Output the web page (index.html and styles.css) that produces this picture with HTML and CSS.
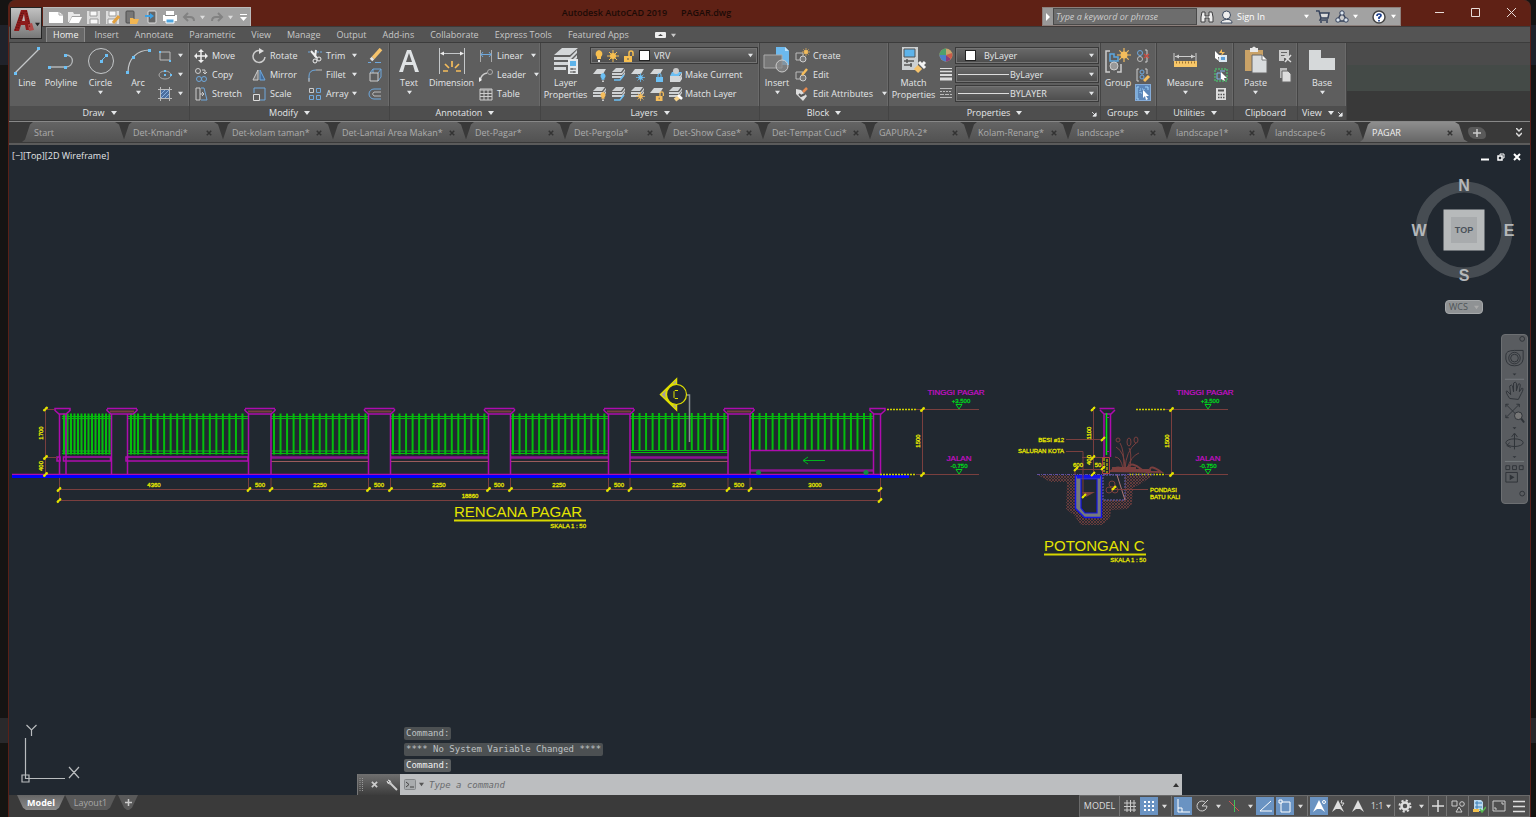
FILE: index.html
```html
<!DOCTYPE html>
<html lang="en">
<head>
<meta charset="utf-8">
<title>Autodesk AutoCAD 2019 - PAGAR.dwg</title>
<link rel="stylesheet" href="styles.css">
</head>
<body>
<svg class="defs" aria-hidden="true">
  <symbol id="down" viewBox="0 0 6 6"><path d="M0 1h6L3 5z" fill="currentColor"/></symbol>
  <symbol id="x" viewBox="0 0 8 8"><path d="M1 1l6 6M7 1L1 7" stroke="currentColor" stroke-width="2"/></symbol>
  <symbol id="corner" viewBox="0 0 6 6"><path d="M0 0l4 4M5 1v4H1z" stroke="currentColor" fill="currentColor"/></symbol>
  <symbol id="sheet" viewBox="0 0 16 16"><path d="M5 2h9l-3 5H1z" fill="#d4d7d9"/></symbol>
  <symbol id="sheets" viewBox="0 0 16 16"><path d="M5 1h8l-3 4H1zM1 6h10l3-4v2l-3 4H1zM1 9h10l3-4v2l-3 4H1z" fill="#cfd2d4"/></symbol>
  <symbol id="bulb" viewBox="0 0 8 12"><path d="M4 0a4 4 0 0 1 2 7v2H2V7A4 4 0 0 1 4 0z" fill="currentColor"/><path d="M3 10h2v2H3z" fill="#eee"/></symbol>
  <symbol id="sun" viewBox="0 0 12 12"><circle cx="6" cy="6" r="3" fill="currentColor"/><path d="M6 0v12M0 6h12M2 2l8 8M10 2l-8 8" stroke="currentColor"/></symbol>
  <symbol id="lock" viewBox="0 0 12 12"><path d="M1 6h8v6H1z" fill="currentColor"/><path d="M6 6V3a2 2 0 0 1 4 0v3" fill="none" stroke="currentColor" stroke-width="1.5"/><path d="M5 8v2" stroke="#555"/></symbol>
  <symbol id="compass" viewBox="0 0 14 14"><path d="M7 1l2 4 4 8-4-3H5l-4 3 4-8z" fill="currentColor"/></symbol>
</svg>

<div class="window">
  <header class="titlebar">
    <button class="appmenu" aria-label="Application menu">
      <svg width="22" height="23" viewBox="0 0 22 23"><path d="M1 22L8 1h6l3 12 1 8h-5l-1-5H8l-2 6z" fill="#8e1c1c"/><path d="M9 12l2-7 1 7z" fill="#c0b8b8"/><path d="M15 15l4-1 2 7-5 1z" fill="#b04a48"/><path d="M2 21L9 3M13 2l4 17M5 19l6-17" stroke="#5c1212" stroke-width="1.200" stroke-dasharray="1 1.500"/></svg>
      <svg class="dn"><use href="#down"/></svg>
    </button>
    <nav class="quick" aria-label="Quick access">
      <button aria-label="New"><svg width="14" height="12"><path d="M0 1h10l4 3v8H0z" fill="#fff"/><path d="M10 1v3h4" stroke="#aaa" fill="none"/></svg></button>
      <button aria-label="Open"><svg width="14" height="12"><path d="M0 1h5l1 2h6v2H4l-3 6H0z" fill="#e9e9e9"/><path d="M4 6h10l-3 6H1z" fill="#fff"/></svg></button>
      <button aria-label="Save"><svg width="14" height="13"><path d="M0 0h13v13H0z" fill="#ddd"/><path d="M3 0h7v5H3zM3 8h8v5H3z" fill="#f8f8f8" stroke="#999"/></svg></button>
      <button aria-label="Save as"><svg width="14" height="13"><path d="M0 0h13v13H0z" fill="#ddd"/><path d="M3 0h7v5H3zM2 8h8v5H2z" fill="#f8f8f8" stroke="#999"/><path d="M7 12l6-7" stroke="#e0a040" stroke-width="3"/></svg></button>
      <button aria-label="Open from web"><svg width="14" height="14"><rect x="1" y="1" width="8" height="12" rx="1" fill="#777" stroke="#505050"/><path d="M5 8h3l1 1h5l-2 5H5z" fill="#f2b652"/></svg></button>
      <button aria-label="Save to mobile"><svg width="14" height="14"><rect x="4" y="1" width="8" height="12" rx="1" fill="#666" stroke="#ddd"/><path d="M1 5h5V3l4 3-4 3V7H1z" fill="#3ba1e6"/></svg></button>
      <button aria-label="Plot"><svg width="14" height="13"><path d="M3 0h8v4H3zM0 4h14v6H0z" fill="#fff"/><path d="M2 4.500h10" stroke="#888"/><path d="M3 8h8v4H3z" fill="#4ea5de" stroke="#fff"/></svg></button>
      <button aria-label="Undo"><svg width="14" height="10"><path d="M12 9q0-4-4-4H3M6 1L2 5l4 4" stroke="#828282" stroke-width="2" fill="none"/></svg></button>
      <button class="mini" aria-label="Undo list"><svg class="dn"><use href="#down"/></svg></button>
      <button aria-label="Redo"><svg width="14" height="10"><path d="M2 9q0-4 4-4h5M8 1l4 4-4 4" stroke="#828282" stroke-width="2" fill="none"/></svg></button>
      <button class="mini" aria-label="Redo list"><svg class="dn"><use href="#down"/></svg></button>
      <button class="mini" aria-label="Customize"><svg width="7" height="8"><path d="M0 1.500h7" stroke="#fff"/><path d="M0 4h7L3.500 8z" fill="#fff"/></svg></button>
    </nav>
    <div class="caption"><span>Autodesk AutoCAD 2019</span><span>PAGAR.dwg</span></div>
    <div class="info">
      <button class="expand" aria-label="Collapse search"><svg width="4" height="8"><path d="M0 0l4 4-4 4z" fill="#fff"/></svg></button>
      <input class="search" type="text" aria-label="Search" placeholder="Type a keyword or phrase">
      <button class="find" aria-label="Find"><svg width="14" height="14"><path d="M2 2h3v4h4V2h3l1 5v5H9V8H5v4H1V7z" fill="#eee" stroke="#3e3e40"/></svg></button>
      <button class="sign"><svg width="13" height="14"><circle cx="6.500" cy="5" r="4" fill="#eee" stroke="#3c4a60"/><path d="M1 13q0-3 5.500-3.500T12 13z" fill="#eee" stroke="#3c4a60"/></svg>Sign In<svg class="dn push"><use href="#down"/></svg></button>
      <button class="cart" aria-label="App store"><svg width="14" height="13"><path d="M0 1h3l2 7h7l1-5H4M5 8l-1 2h8" stroke="#35415a" stroke-width="1.500" fill="#ddd"/><circle cx="5" cy="12" r="1" fill="#35415a"/><circle cx="11" cy="12" r="1" fill="#35415a"/></svg></button>
      <button class="net" aria-label="Stay connected"><svg width="14" height="13"><path d="M7 2l5 9H2z" stroke="#35415a" stroke-width="1.500" fill="#ccc"/><g fill="#dce6f0" stroke="#35415a"><circle cx="7" cy="3" r="2.200"/><circle cx="3" cy="10" r="2.200"/><circle cx="11" cy="10" r="2.200"/></g></svg><svg class="dn"><use href="#down"/></svg></button>
      <button class="help" aria-label="Help"><svg width="14" height="14"><circle cx="7" cy="7" r="6" fill="#fff" stroke="#444" stroke-width="1.500"/><path d="M5 6q0-2 2-2t2 1.500q0 1-2 2V9M7 10v1.500" stroke="#1b3f8f" stroke-width="1.700" fill="none"/></svg><svg class="dn"><use href="#down"/></svg></button>
    </div>
    <div class="winbtns">
      <button aria-label="Minimize"><svg width="9" height="9"><path d="M0 4.500h9" stroke="#e8dcd8"/></svg></button>
      <button aria-label="Maximize"><svg width="9" height="9"><path d="M.5.5h8v8h-8z" stroke="#e8dcd8" fill="none"/></svg></button>
      <button aria-label="Close"><svg width="9" height="9"><path d="M0 0l9 9M9 0L0 9" stroke="#e8dcd8"/></svg></button>
    </div>
  </header>

  <nav class="menu" aria-label="Ribbon tabs">
    <button class="on">Home</button><button>Insert</button><button>Annotate</button><button>Parametric</button><button>View</button><button>Manage</button><button>Output</button><button>Add-ins</button><button>Collaborate</button><button>Express Tools</button><button>Featured Apps</button>
    <button class="tog" aria-label="Minimize ribbon"><svg width="11" height="6"><rect width="11" height="6" rx="1" fill="#eee"/><path d="M3 4h5L5.500 2z" fill="#444"/></svg><svg class="dn"><use href="#down"/></svg></button>
  </nav>

  <div class="ribbon">
    <section class="panel draw">
      <div class="tools">
        <button class="big"><svg class="bi" viewBox="0 0 30 30"><path d="M3 27L27 3" stroke="#c4c7c9" stroke-width="1.200"/><path d="M2 26h3v3H2zM25 1h3v3h-3z" fill="#6cc0f5"/></svg>Line</button>
        <button class="big"><svg class="bi" viewBox="0 0 30 30"><path d="M3 21h17c8 0 9-12 0-12" stroke="#b2b5b7" stroke-width="1.300" fill="none"/><path d="M2 20h3v3H2zM18 20h3v3h-3zM18 8h3v3h-3z" fill="#6cc0f5"/></svg>Polyline</button>
        <button class="big"><svg class="bi" viewBox="0 0 30 30"><circle cx="15" cy="15" r="12.500" stroke="#c4c7c9" fill="none"/><path d="M15 15l6-6" stroke="#6cc0f5"/><path d="M14 14h3v3h-3zM19 8h3v3h-3z" fill="#6cc0f5"/></svg>Circle<svg class="dn"><use href="#down"/></svg></button>
        <button class="big"><svg class="bi" viewBox="0 0 30 30"><path d="M5 26C5 13 14 4 27 4" stroke="#c4c7c9" fill="none" stroke-width="1.200"/><path d="M3 25h3v3H3zM9 10h3v3H9zM25 3h3v3h-3z" fill="#6cc0f5"/></svg>Arc<svg class="dn"><use href="#down"/></svg></button>
        <div class="stack">
          <button class="sm" aria-label="Rectangle"><svg class="si" viewBox="0 0 16 16"><path d="M3 4h10v8H3z" fill="none" stroke="#bbb"/><path d="M2 3h2v2H2zM12 12h2v2h-2z" fill="#6cc0f5"/></svg><svg class="dn"><use href="#down"/></svg></button>
          <button class="sm" aria-label="Ellipse"><svg class="si" viewBox="0 0 16 16"><ellipse cx="8" cy="8" rx="6" ry="4" fill="none" stroke="#aaa"/><path d="M7 7h2v2H7zM13 7h2v2h-2zM7 3h2v2H7z" fill="#6cc0f5"/></svg><svg class="dn"><use href="#down"/></svg></button>
          <button class="sm" aria-label="Hatch"><svg class="si" viewBox="0 0 16 16"><path d="M4 4h8v8H4z" fill="#4d6f9e"/><path d="M4 8l4-4M4 12l8-8M8 12l4-4" stroke="#8ab0dd"/><path d="M3.500 1v14M12.500 1v14M1 3.500h14M1 12.500h14" stroke="#bbb"/></svg><svg class="dn"><use href="#down"/></svg></button>
        </div>
      </div>
      <h2>Draw <svg class="dn"><use href="#down"/></svg></h2>
    </section>

    <section class="panel modify">
      <div class="tools">
        <div class="stack">
          <button class="sm"><svg class="si" viewBox="0 0 16 16"><path d="M8 3v10M3 8h10" stroke="#eee" stroke-width="1.500"/><path d="M8 1l3 3H5zM8 15l3-3H5zM1 8l3-3v6zM15 8l-3-3v6z" fill="#eee"/></svg>Move</button>
          <button class="sm"><svg class="si" viewBox="0 0 16 16"><g fill="none"><circle cx="5" cy="4" r="2.500" stroke="#ccc"/><circle cx="6" cy="12" r="2.500" stroke="#6ea8dd"/><circle cx="11" cy="12" r="2.500" stroke="#6ea8dd"/><path d="M9 3h3v4M10 5l2 2 2-2" stroke="#ccc"/></g></svg>Copy</button>
          <button class="sm"><svg class="si" viewBox="0 0 16 16"><path d="M3 2h4v12H3zM7 8h4M9 6l2 2-2 2" stroke="#ccc" fill="none"/><path d="M8 2h3l3 12H8" stroke="#6ea8dd" fill="none"/></svg>Stretch</button>
        </div>
        <div class="stack">
          <button class="sm"><svg class="si" viewBox="0 0 16 16"><path d="M9 2.500A6 6 0 1 0 14 9" stroke="#ccc" fill="none" stroke-width="1.500"/><path d="M8 0l5 3-5 3z" fill="#ddd"/></svg>Rotate</button>
          <button class="sm"><svg class="si" viewBox="0 0 16 16"><path d="M7 3v10H2z" fill="#777" stroke="#ccc"/><path d="M9 3v10h5z" fill="#426a99" stroke="#6ea8dd"/></svg>Mirror</button>
          <button class="sm"><svg class="si" viewBox="0 0 16 16"><path d="M3 7V2h11v12H9" fill="none" stroke="#6ea8dd"/><path d="M2.500 8.500h6v6h-6z" fill="none" stroke="#ddd"/></svg>Scale</button>
        </div>
        <div class="stack trim">
          <button class="sm"><svg class="si" viewBox="0 0 16 16"><path d="M4 3l6 7M9 2L8 9" stroke="#eee" stroke-width="2"/><circle cx="8" cy="13" r="2" fill="none" stroke="#eee"/><circle cx="12" cy="11" r="2" fill="none" stroke="#eee"/><path d="M1 4h3M10 4h5" stroke="#6ea8dd" stroke-dasharray="2 1"/></svg>Trim<svg class="dn push"><use href="#down"/></svg></button>
          <button class="sm"><svg class="si" viewBox="0 0 16 16"><path d="M2 14V9q0-6 7-6" fill="none" stroke="#6ea8dd"/><path d="M9 3h6M2 11v4" stroke="#bbb"/></svg>Fillet<svg class="dn push"><use href="#down"/></svg></button>
          <button class="sm"><svg class="si" viewBox="0 0 16 16"><path d="M2.500 2.500h4v4h-4z" stroke="#ccc" fill="none"/><path d="M9.500 2.500h4v4h-4zM2.500 9.500h4v4h-4zM9.500 9.500h4v4h-4z" stroke="#6ea8dd" fill="none"/></svg>Array<svg class="dn push"><use href="#down"/></svg></button>
        </div>
        <div class="stack">
          <button class="sm" aria-label="Erase"><svg class="si" viewBox="0 0 16 16"><path d="M6 10l8-9" stroke="#f5c36c" stroke-width="3.500"/><path d="M4 12l2-2" stroke="#e5e5e5" stroke-width="3.500"/><path d="M1 14.500h3M8 14.500h6" stroke="#6ea8dd"/></svg></button>
          <button class="sm" aria-label="Explode"><svg class="si" viewBox="0 0 16 16"><path d="M3 6l3-4h8v8l-3 4M11 6l3-4M6 2v4" fill="none" stroke="#6ea8dd"/><path d="M3 6h8v8H3z" fill="none" stroke="#ccc"/></svg></button>
          <button class="sm" aria-label="Offset"><svg class="si" viewBox="0 0 16 16"><path d="M14 3H7a5 5 0 0 0 0 10h7" stroke="#6ea8dd" fill="none"/><path d="M14 6H7q-3 2 0 4h7" stroke="#bbb" fill="none"/></svg></button>
        </div>
      </div>
      <h2>Modify <svg class="dn"><use href="#down"/></svg></h2>
    </section>

    <section class="panel annot">
      <div class="tools">
        <button class="big"><svg class="bi" viewBox="0 0 30 30"><path d="M5 26L13 4h4l8 22h-4l-2-7h-8l-2 7zM12 16h6l-3-9z" fill="#dfe2e4" fill-rule="evenodd"/></svg>Text<svg class="dn"><use href="#down"/></svg></button>
        <button class="big"><svg class="bi" viewBox="0 0 30 30"><path d="M2.500 2v26M27.500 2v26M4 7.500h22" stroke="#c4c7c9"/><path d="M3 7.500l4-2v4zM27 7.500l-4-2v4z" fill="#eee"/><path d="M6 25h5M19 25h5M8 18l4 4M22 18l-4 4M15 15v6" stroke="#f5bd5c" stroke-width="1.700"/></svg>Dimension</button>
        <div class="stack">
          <button class="sm"><svg class="si" viewBox="0 0 16 16"><path d="M2.500 2v12M13.500 2v12" stroke="#aaa"/><path d="M3 6.500h10M5 4L3 6.500 5 9M11 4l2 2.500L11 9" stroke="#6ea8dd" fill="none"/></svg>Linear<svg class="dn"><use href="#down"/></svg></button>
          <button class="sm"><svg class="si" viewBox="0 0 16 16"><path d="M2 14q1-7 7-8" stroke="#ccc" fill="none" stroke-width="1.500"/><circle cx="12" cy="5" r="2.500" stroke="#aaa" fill="none"/><path d="M1 15v-5l3 3z" fill="#eee"/></svg>Leader<svg class="dn"><use href="#down"/></svg></button>
          <button class="sm"><svg class="si" viewBox="0 0 16 16"><path d="M2 3h12v11H2z" fill="none" stroke="#ccc"/><path d="M2 4h12M2 7.500h12M2 10.500h12M6 4v10M10 4v10" stroke="#ccc"/></svg>Table</button>
        </div>
      </div>
      <h2>Annotation <svg class="dn"><use href="#down"/></svg></h2>
    </section>

    <section class="panel layers">
      <div class="tools">
        <button class="big"><svg class="bi" viewBox="0 0 30 30"><path d="M11 2h16l-8 7H3zM3 11h16l7-7v3l-7 7H3zM3 16h16l7-7v3l-7 7H3zM3 21h12v3H3z" fill="#d4d7d9"/><path d="M17 13h10v15H17z" fill="#e5e8ea"/><path d="M19 15h6v5h-6z" fill="#5db3ea"/><path d="M19 23h6M19 26h6M21 22v2M23 25v2" stroke="#555"/></svg>Layer<br>Properties</button>
        <div class="side">
          <label class="combo layer"><svg width="8" height="12" class="amb"><use href="#bulb"/></svg><svg width="12" height="12" class="amb"><use href="#sun"/></svg><svg width="12" height="12" class="amb"><use href="#lock"/></svg><i class="swatch"></i><select aria-label="Layer"><option>VRV</option></select><svg class="dn"><use href="#down"/></svg></label>
          <div class="line">
            <button class="sm" aria-label="Off"><svg class="si" viewBox="0 0 16 16"><use href="#sheet"/><use href="#bulb" x="8" y="6" width="6" height="9" color="#6cc0f5"/></svg></button>
            <button class="sm" aria-label="Isolate"><svg class="si" viewBox="0 0 16 16"><use href="#sheets"/><path d="M3 13h6l4-5" stroke="#6cc0f5" stroke-width="1.500" fill="none"/></svg></button>
            <button class="sm" aria-label="Freeze"><svg class="si" viewBox="0 0 16 16"><use href="#sheet"/><use href="#sun" x="6" y="6" width="9" height="9" color="#6cc0f5"/></svg></button>
            <button class="sm" aria-label="Lock"><svg class="si" viewBox="0 0 16 16"><use href="#sheet"/><path d="M7 10h7v5H7z" fill="#6cc0f5"/><path d="M9 10V8a1.500 1.500 0 0 1 3 0v2" stroke="#6cc0f5" fill="none"/></svg></button>
            <button class="sm"><svg class="si" viewBox="0 0 16 16"><path d="M2 9h10l2-4v3l-2 4H2zM2 12h10l2-3v3l-2 3H2z" fill="#d4d7d9"/><path d="M4 5h10l-3 4H2z" fill="#6cc0f5"/><circle cx="8" cy="4" r="3" fill="#ccc"/></svg>Make Current</button>
          </div>
          <div class="line">
            <button class="sm" aria-label="Turn all on"><svg class="si" viewBox="0 0 16 16"><use href="#sheets"/><use href="#bulb" x="8" y="6" width="6" height="9" color="#f5bd5c"/></svg></button>
            <button class="sm" aria-label="Unisolate"><svg class="si" viewBox="0 0 16 16"><use href="#sheets"/><path d="M3 14h6l4-5" stroke="#6cc0f5" stroke-width="1.500" fill="none"/></svg></button>
            <button class="sm" aria-label="Thaw all"><svg class="si" viewBox="0 0 16 16"><use href="#sheets"/><use href="#sun" x="6" y="6" width="9" height="9" color="#f5bd5c"/></svg></button>
            <button class="sm" aria-label="Unlock"><svg class="si" viewBox="0 0 16 16"><use href="#sheet"/><use href="#lock" x="6" y="5" width="10" height="10" color="#f5bd5c"/></svg></button>
            <button class="sm"><svg class="si" viewBox="0 0 16 16"><use href="#sheets"/><path d="M7 14l4-3" stroke="#f5d28c" stroke-width="4"/><path d="M10 9l4 4" stroke="#fff" stroke-width="2.500"/></svg>Match Layer</button>
          </div>
        </div>
      </div>
      <h2>Layers <svg class="dn"><use href="#down"/></svg></h2>
    </section>

    <section class="panel block">
      <div class="tools">
        <button class="big"><svg class="bi" viewBox="0 0 30 30"><path d="M14 1h9l4 4v14H14z" fill="#6cb9ee"/><path d="M23 1v4h4" fill="#bfe2fa"/><path d="M2 9h18v13H2z" fill="#777" stroke="#aaa"/><circle cx="20" cy="20" r="6" fill="#888b" stroke="#ccc"/></svg>Insert<svg class="dn"><use href="#down"/></svg></button>
        <div class="stack">
          <button class="sm"><svg class="si" viewBox="0 0 16 16"><path d="M2 5h7v7H2z" fill="none" stroke="#bbb"/><circle cx="9" cy="11" r="3" fill="#777" stroke="#ccc"/><use href="#sun" x="8" y="0" width="8" height="8" color="#f5bd5c"/></svg>Create</button>
          <button class="sm"><svg class="si" viewBox="0 0 16 16"><path d="M2 5h7v7H2z" fill="none" stroke="#bbb"/><circle cx="9" cy="11" r="3" fill="#777" stroke="#ccc"/><path d="M8 8l5-6" stroke="#f5bd5c" stroke-width="2.500"/></svg>Edit</button>
          <button class="sm"><svg class="si" viewBox="0 0 16 16"><path d="M2 3l5 1 6 6-4 5-7-7z" fill="#ddd"/><path d="M5 8l2 2 4-2" stroke="#555" stroke-width="2" fill="none"/><path d="M9 6l4-4" stroke="#e58a50" stroke-width="2.500"/></svg>Edit Attributes<svg class="dn wide"><use href="#down"/></svg></button>
        </div>
      </div>
      <h2>Block <svg class="dn"><use href="#down"/></svg></h2>
    </section>

    <section class="panel props">
      <div class="tools">
        <button class="big"><svg class="bi" viewBox="0 0 30 30"><path d="M3 1h16v23H3z" fill="#ccd0d2"/><path d="M5 3h11v8H5z" fill="#5db3ea" stroke="#555"/><path d="M5 15h10M5 19h8M8 13v4M12 17v4" stroke="#555" stroke-width="1.500"/><path d="M17 25l4-4" stroke="#f5c36c" stroke-width="6"/><path d="M20 16l6 6M23 19l3-3" stroke="#f4f4f4" stroke-width="3"/></svg>Match<br>Properties</button>
        <div class="stack icons">
          <svg class="si" viewBox="0 0 16 16"><circle cx="8" cy="8" r="6.500" fill="#c7a56e"/><path d="M8 8V1.500A6.500 6.500 0 0 0 1.500 8z" fill="#4ea06b"/><path d="M8 8H1.500A6.500 6.500 0 0 0 8 14.500z" fill="#4a7fc8"/><path d="M8 8v6.500A6.500 6.500 0 0 0 13 12z" fill="#8a3d7c"/><path d="M8 8l5 4a6.500 6.500 0 0 0 1-6z" fill="#cc5b49"/></svg>
          <svg class="si" viewBox="0 0 16 16"><path d="M2 2.500h12" stroke="#ddd"/><path d="M2 5.500h12" stroke="#ddd" stroke-width="1.500"/><path d="M2 9h12" stroke="#ddd" stroke-width="2"/><path d="M2 13h12" stroke="#ddd" stroke-width="3"/></svg>
          <svg class="si" viewBox="0 0 16 16"><path d="M2 3.500h12M2 12.500h12" stroke="#bbb"/><path d="M2 6.500h12" stroke="#bbb" stroke-dasharray="2 1"/><path d="M2 9.500h12" stroke="#bbb" stroke-dasharray="4 1"/></svg>
        </div>
        <div class="side">
          <label class="combo"><i class="swatch"></i><select aria-label="Color"><option>ByLayer</option></select><svg class="dn"><use href="#down"/></svg></label>
          <label class="combo"><i class="rule"></i><select aria-label="Lineweight"><option>ByLayer</option></select><svg class="dn"><use href="#down"/></svg></label>
          <label class="combo"><i class="rule"></i><select aria-label="Linetype"><option>BYLAYER</option></select><svg class="dn"><use href="#down"/></svg></label>
        </div>
      </div>
      <h2>Properties <svg class="dn"><use href="#down"/></svg><svg class="launch"><use href="#corner"/></svg></h2>
    </section>

    <section class="panel groups">
      <div class="tools">
        <button class="big"><svg class="bi" viewBox="0 0 30 30"><path d="M7 5H3v21h4M14 26h4V18" stroke="#ccc" stroke-width="1.500" fill="none"/><path d="M7 8h4v3h4v4H7z" fill="none" stroke="#5da8e0" stroke-width="1.500"/><circle cx="11" cy="20" r="4" fill="#999" stroke="#ccc"/><use href="#sun" x="14" y="2" width="14" height="14" color="#f5bd5c"/></svg>Group</button>
        <div class="stack">
          <button class="sm" aria-label="Ungroup"><svg class="si" viewBox="0 0 16 16"><circle cx="5" cy="5" r="2.500" stroke="#6ea8dd" fill="none"/><circle cx="5" cy="11" r="2.500" stroke="#bbb" fill="none"/><path d="M10 2h2v12h-2" stroke="#ccc" fill="none"/><path d="M9 6l5 4M14 6l-5 4" stroke="#c94c42" stroke-width="1.500"/></svg></button>
          <button class="sm" aria-label="Group edit"><svg class="si" viewBox="0 0 16 16"><path d="M4 2H2v12h2M10 2h2v5" stroke="#ccc" fill="none"/><circle cx="7" cy="5" r="2" stroke="#6ea8dd" fill="none"/><circle cx="7" cy="10" r="2" stroke="#6ea8dd" fill="none"/><path d="M9 14l5-5" stroke="#f5bd5c" stroke-width="3"/></svg></button>
          <button class="sm active" aria-label="Group selection"><svg class="si" viewBox="0 0 16 16"><path d="M4 2H2v12h2M10 2h3v3" stroke="#9dd2fa" fill="none"/><path d="M5 4h4v4H5z" stroke="#9dd2fa" fill="none" stroke-dasharray="1 1"/><path d="M8 5l6 6h-3l2 3-2 1-1-4-2 2z" fill="#fff"/></svg></button>
        </div>
      </div>
      <h2>Groups <svg class="dn"><use href="#down"/></svg></h2>
    </section>

    <section class="panel utils">
      <div class="tools">
        <button class="big"><svg class="bi" viewBox="0 0 30 30"><path d="M4 7v8M26 7v8M5 10.500h20" stroke="#ccc"/><path d="M5 10.500l4-2v4zM25 10.500l-4-2v4z" fill="#ccc"/><path d="M4 15h23v6H4z" fill="#f8c768"/><path d="M6 16.500h19" stroke="#9b7332" stroke-width="2" stroke-dasharray="1 2"/></svg>Measure<svg class="dn"><use href="#down"/></svg></button>
        <div class="stack">
          <button class="sm" aria-label="Quick select"><svg class="si" viewBox="0 0 16 16"><path d="M6 7h8v7H6z" fill="#dce8f2"/><path d="M8 9h4v3H8z" fill="#5b9ed8"/><path d="M2 3l6 6H5l1 4-4-3z" fill="#fff"/><path d="M9 1L6 5h3l-1 3 4-4H9z" fill="#f5bd5c"/></svg></button>
          <button class="sm" aria-label="Select all"><svg class="si" viewBox="0 0 16 16"><path d="M2 2h12v12H2z" fill="none" stroke="#4cb36a" stroke-width="1.500" stroke-dasharray="2 1"/><path d="M4 6h4v6H4zM7 4h5" stroke="#7fb7e8" fill="none"/><path d="M8 5l6 6h-3l1 3-4-2z" fill="#fff"/></svg></button>
          <button class="sm" aria-label="Calculator"><svg class="si" viewBox="0 0 16 16"><path d="M3 2h10v12H3z" fill="#ddd"/><path d="M5 4.500h6" stroke="#555" stroke-width="2"/><path d="M5 8.500h7M5 11.500h7" stroke="#555" stroke-width="1.500" stroke-dasharray="1.500 1"/></svg></button>
        </div>
      </div>
      <h2>Utilities <svg class="dn"><use href="#down"/></svg></h2>
    </section>

    <section class="panel clip">
      <div class="tools">
        <button class="big"><svg class="bi" viewBox="0 0 30 30"><path d="M4 4h18v21H4z" fill="#c9a267"/><path d="M9 2h2q2-3 4 0h2v4H9z" fill="#e8e8e8"/><path d="M11 9h10l5 5v13H11z" fill="#d9dcde" stroke="#666"/><path d="M21 9v5h5" fill="#fff" stroke="#777"/></svg>Paste<svg class="dn"><use href="#down"/></svg></button>
        <div class="stack two">
          <button class="sm" aria-label="Cut"><svg class="si" viewBox="0 0 16 16"><path d="M2 2h10v8H7v3H2z" fill="#ccc"/><path d="M4 4.500h6M4 7.500h4" stroke="#666"/><path d="M7 8l7 6M14 7l-6 7" stroke="#ddd" stroke-width="1.500"/></svg></button>
          <button class="sm" aria-label="Copy clip"><svg class="si" viewBox="0 0 16 16"><path d="M3 1h7v10H3z" fill="#bbb"/><path d="M5 4h6l3 3v8H5z" fill="#ddd" stroke="#666"/></svg></button>
        </div>
      </div>
      <h2>Clipboard</h2>
    </section>

    <section class="panel view">
      <div class="tools">
        <button class="big"><svg class="bi" viewBox="0 0 30 30"><path d="M2 4h12v8h14v12H2z" fill="#d6d9da"/></svg>Base<svg class="dn"><use href="#down"/></svg></button>
      </div>
      <h2>View <svg class="dn"><use href="#down"/></svg><svg class="launch"><use href="#corner"/></svg></h2>
    </section>
    <div class="rest"></div>
  </div>

  <nav class="files" aria-label="Open drawings">
    <button class="file"><span>Start</span></button>
    <button class="file"><span>Det-Kmandi*</span><svg class="cx"><use href="#x"/></svg></button>
    <button class="file kolam"><span>Det-kolam taman*</span><svg class="cx"><use href="#x"/></svg></button>
    <button class="file lantai"><span>Det-Lantai Area Makan*</span><svg class="cx"><use href="#x"/></svg></button>
    <button class="file"><span>Det-Pagar*</span><svg class="cx"><use href="#x"/></svg></button>
    <button class="file"><span>Det-Pergola*</span><svg class="cx"><use href="#x"/></svg></button>
    <button class="file"><span>Det-Show Case*</span><svg class="cx"><use href="#x"/></svg></button>
    <button class="file cuci"><span>Det-Tempat Cuci*</span><svg class="cx"><use href="#x"/></svg></button>
    <button class="file"><span>GAPURA-2*</span><svg class="cx"><use href="#x"/></svg></button>
    <button class="file"><span>Kolam-Renang*</span><svg class="cx"><use href="#x"/></svg></button>
    <button class="file"><span>landscape*</span><svg class="cx"><use href="#x"/></svg></button>
    <button class="file"><span>landscape1*</span><svg class="cx"><use href="#x"/></svg></button>
    <button class="file last"><span>landscape-6</span><svg class="cx"><use href="#x"/></svg></button>
    <button class="file on"><span>PAGAR</span><svg class="cx"><use href="#x"/></svg></button>
    <button class="plus" aria-label="New drawing"><svg width="8" height="8"><path d="M4 0v8M0 4h8" stroke="#ccc" stroke-width="1.500"/></svg></button>
    <button class="more" aria-label="More drawings"><svg width="6" height="9"><path d="M0 0l3 3 3-3M0 5l3 3 3-3" stroke="#ddd" stroke-width="1.500" fill="none"/></svg></button>
  </nav>

  <main class="canvas">
    <svg class="drawing" viewBox="9 145 1521 650" preserveAspectRatio="xMinYMin meet" role="img" aria-label="Fence elevation and section">
      <defs>
        <g id="cap"><path d="M-15 408.500H15M-15 409v1.500L-11 414H11L15 410.500V409" class="mag2"/><path d="M-12 411.500H12" class="salmon"/></g>
        <g id="tick"><path d="M-2 2L2-2" stroke="#e0e000" stroke-width="2"/><path d="M-2 1h2M0-1h2" stroke="#e0e000" stroke-width="2"/></g>
        <g id="level"><path d="M-3 404.500h6l-3 4.500z" fill="none" stroke="#00d41c"/></g>
        <pattern id="soil" width="3" height="3" patternUnits="userSpaceOnUse"><path d="M0 3L3 0M0 0l3 3" stroke="#7c4240" stroke-width=".7"/></pattern>
        <g id="levels">
          <text x="956" y="395" class="cad m mid">TINGGI PAGAR</text><text x="961" y="403" class="cad g mid">+3.500</text><use href="#level" x="959"/>
          <text x="959" y="461" class="cad m mid">JALAN</text><text x="959" y="468" class="cad g mid">-0.750</text><use href="#level" x="959" y="65"/>
          <path d="M922.500 409.500v65M916 409.500h63M916 474.500h63" class="brown"/>
          <path d="M887 409.500h29M880 474.500h36" stroke="#d0d000" stroke-width="1.500" stroke-dasharray="2 1"/>
          <use href="#tick" x="922.500" y="409.500"/><use href="#tick" x="922.500" y="474.500"/>
          <text transform="translate(920 441) rotate(-90)" class="cad s y mid">1500</text>
        </g>
      </defs>

      <g class="bars">
        <path d="M63 434h49" stroke-width="41" stroke-dasharray="2 1.500"/>
        <path d="M130 434h7" stroke-width="41" stroke-dasharray="2 1.500"/>
        <path d="M137 434h111M273 434h96M392 434h96M512 434h96" stroke-width="41" stroke-dasharray="2 4.530"/>
        <path d="M632 432h96" stroke-width="38" stroke-dasharray="2 4.530"/><path d="M752 431.500h121" stroke-width="37" stroke-dasharray="2 4.530"/>
        <path d="M62 416.500h49M128 416.500h120M271 416.500h98M391 416.500h97M511 416.500h97M630 416.500h98M750 416.500h123M62 418.500h49M128 418.500h120M271 418.500h98M391 418.500h97M511 418.500h97M630 418.500h98M750 418.500h123M62 451h49M128 451h120M271 451h98M391 451h97M511 451h97M630 450.500h98M62 453.500h49M128 453.500h120M271 453.500h98M391 453.500h97M511 453.500h97M630 452.500h98" stroke-width="1.200"/>
      </g>
      <path d="M271 461.500h97M391 461.500h97M511 461.500h97M630 461.500h98" stroke="#9c5c5c"/>
      <path d="M271 457.500h97M391 457.500h97M511 457.500h97M630 457.500h98M750 470.500h123" class="mag3"/>
      <path d="M59.500 414v60M66 414v60M111.500 414v60M127.500 414v60M248.500 414v60M271 414v60M368.500 414v60M390.500 414v60M488.500 414v60M510.500 414v60M608.500 414v60M630 414v60M728 414v60M750 414v60M873.500 414v60M880.500 414v60" class="mag2"/>
      <path d="M63.500 457h47v4h-47zM126 457h122v4H126zM57 457h3v4h-3zM750 450.500h123" class="mag2"/>
      <path d="M55 408.500h15v2l-4 3.500h-7l-4-3.500zM870 408.500h15v2l-4 3.500h-7l-4-3.500z" class="mag2"/>
      <g><use href="#cap" x="122"/><use href="#cap" x="260"/><use href="#cap" x="379.500"/><use href="#cap" x="499.500"/><use href="#cap" x="619"/><use href="#cap" x="739"/></g>
      <path d="M12 474.500h869" class="mag2"/><path d="M12 476.500h897" stroke="#0000fa" stroke-width="3"/>
      <path d="M825 460.500h-22M808 457l-5 3.500 5 3.500" stroke="#00b41c" fill="none"/><circle cx="758.500" cy="472.500" r="2.500" fill="#108a48"/><circle cx="866" cy="472.500" r="2.500" fill="#108a48"/>

      <path d="M45.500 409v65M45 409.500h9M45 457.500h12M59.500 489.500h821M59.500 500.500h821M59.500 478v23M248.500 478v11M271 478v11M368.500 478v11M390.500 478v11M488.500 478v11M510.500 478v11M608.500 478v11M630 478v11M728 478v11M750 478v11M880.500 478v23" class="brown"/>
      <g><use href="#tick" x="45.500" y="409"/><use href="#tick" x="45.500" y="457.500"/><use href="#tick" x="45.500" y="474.500"/><use href="#tick" x="59" y="489.500"/><use href="#tick" x="249" y="489.500"/><use href="#tick" x="271" y="489.500"/><use href="#tick" x="368.500" y="489.500"/><use href="#tick" x="390.500" y="489.500"/><use href="#tick" x="488.500" y="489.500"/><use href="#tick" x="510.500" y="489.500"/><use href="#tick" x="608.500" y="489.500"/><use href="#tick" x="630" y="489.500"/><use href="#tick" x="728" y="489.500"/><use href="#tick" x="750" y="489.500"/><use href="#tick" x="880" y="489.500"/><use href="#tick" x="59" y="500.500"/><use href="#tick" x="880" y="500.500"/></g>
      <g class="cad s y mid">
        <text x="154" y="487">4360</text><text x="260" y="487">500</text><text x="320" y="487">2250</text><text x="379" y="487">500</text><text x="439" y="487">2250</text><text x="499" y="487">500</text><text x="559" y="487">2250</text><text x="619" y="487">500</text><text x="679" y="487">2250</text><text x="739" y="487">500</text><text x="815" y="487">3000</text><text x="470" y="498">18860</text>
        <text transform="translate(43 433) rotate(-90)">1700</text><text transform="translate(43 466) rotate(-90)">400</text>
      </g>
      <text x="454" y="517" class="head">RENCANA PAGAR</text><path d="M454 520.500h132" class="under"/><text x="586" y="528" class="cad s y end">SKALA 1 : 50</text>
      <path d="M660.500 394.500L676.500 379v5a10.500 10.500 0 0 0 0 21v5z" fill="#a99ba0" stroke="#e0e000" stroke-width="1.500"/><circle cx="676.500" cy="394.500" r="10" fill="#212830" stroke="#e0e000" stroke-width="1.200"/><path d="M678 390.500h-3l-1 1v6l1 1h3" stroke="#e0e000" fill="none"/><path d="M687 395h2.500v47" stroke="#8c8f92" fill="none" stroke-width="1.500"/>
      <use href="#levels"/><use href="#levels" x="249"/>

      <path d="M1038 475h115l-8 6-12 7-1 16-5 5-16 1-1 8-8 7h-21l-7-10-8-6 1-27h-17z" fill="url(#soil)"/>
      <path d="M1103 475h22v25h-22z" fill="#212830" stroke="#6860b0" stroke-dasharray="2 1"/><path d="M1117 475l8 25" stroke="#b07878"/>
      <path d="M1075.500 475.500h26v42h-17l-9-9z" fill="#75797c" stroke="#1515e8" stroke-width="1.500"/><path d="M1081 479h16v34h-12l-4-5z" fill="#212830" stroke="#1515e8" stroke-width="1.200"/><path d="M1077 477h23" stroke="#1515e8" stroke-width="3"/>
      <path d="M1037 474.500h118" stroke="#6050a0" stroke-dasharray="3 1 1 1"/>
      <path d="M1082 492h13l-9 5z" fill="#7c4240"/>
      <g class="brown" fill="none"><circle cx="1112" cy="484" r="3"/><circle cx="1109" cy="490" r="3"/><circle cx="1115" cy="490" r="3"/>
        <path d="M1093.500 409v65M1066 439.500h38M1066 451.500h17v46M1114 489.500h34M1082 457.500h22M1074 469.500h29M1075 469v6"/>
        <path d="M1125 469q0-17-9-22M1125 469q1-18 11-26M1124 469q0-20-4-26M1127 469q4-13 12-16M1123 469q-2-12-8-12M1130 468q2-16-1-20"/><circle cx="1118" cy="440" r="2"/><ellipse cx="1129" cy="442" rx="2" ry="4"/><ellipse cx="1136" cy="440" rx="2" ry="3"/><path d="M1111 471q5-5 10-3t8-2 12 3 9 1 11 2zM1112 468h24M1114 470h35" stroke-width="2"/>
      </g>
      <path d="M1099.500 408.500h15M1100 410l4 4h7l4-4M1104 414v43M1110.500 414v43" class="mag2"/><path d="M1106.500 413v42" stroke="#00e018" stroke-width="1.500"/><path d="M1108 417v1M1108 451v1" stroke="#b000b0" stroke-width="2"/>
      <path d="M1102.500 457.500h7v16h-7z" fill="none" stroke="#b04040"/><path d="M1104 458v14M1107 459v14" stroke="#e0e000" stroke-dasharray="3 1"/>
      <g><use href="#tick" x="1093" y="409"/><use href="#tick" x="1093" y="457.500"/><use href="#tick" x="1093" y="474"/><use href="#tick" x="1076" y="469"/><use href="#tick" x="1103" y="468"/><use href="#tick" x="1103" y="439"/><use href="#tick" x="1084" y="496"/><use href="#tick" x="1114" y="488"/></g>
      <g class="cad s y"><text x="1064" y="442" class="end">BESI ø12</text><text x="1064" y="453" class="end">SALURAN KOTA</text><text x="1150" y="492">PONDASI</text><text x="1150" y="499">BATU KALI</text><text x="1078" y="467" class="mid">600</text><text x="1098" y="467" class="mid">50</text><text transform="translate(1091 433) rotate(-90)" class="mid">1100</text><text transform="translate(1091 460) rotate(-90)" class="mid">400</text></g>
      <text x="1044" y="551" class="head">POTONGAN C</text><path d="M1044 554.500h102" class="under"/><text x="1146" y="562" class="cad s y end">SKALA 1 : 50</text>
      <path d="M25.500 738v40.500H65M22 775h7v7h-7zM26.500 725l5 5 5-5M31.500 730v6M69 767l10 11M79 767l-10 11" stroke="#b9bcbe" fill="none" stroke-width="1.200"/>
    </svg>

    <div class="docbtns">
      <button aria-label="Minimize drawing"><svg width="8" height="8"><path d="M0 6.500h8" stroke="#fff" stroke-width="2"/></svg></button>
      <button aria-label="Restore drawing"><svg width="8" height="8"><path d="M3 2V1h4v4H6" stroke="#fff" fill="none"/><path d="M1 3h4v4H1z" stroke="#fff" stroke-width="1.500" fill="none"/></svg></button>
      <button aria-label="Close drawing"><svg width="8" height="8"><path d="M1 1l6 6M7 1L1 7" stroke="#fff" stroke-width="2"/></svg></button>
    </div>
    <div class="viewlabel"><button>[−]</button><button>[Top]</button><button>[2D Wireframe]</button></div>
    <div class="cube">
      <svg viewBox="0 0 108 108"><circle cx="54" cy="54" r="43" fill="none" stroke="#464c52" stroke-width="11"/><path d="M33.500 33.500h41v41h-41z" fill="#b7babb"/><path d="M41 41h26v26H41z" fill="#a8abad"/><g class="nesw"><text x="54" y="15">N</text><text x="54" y="105">S</text><text x="9" y="60">W</text><text x="99" y="60">E</text></g><text x="54" y="57" class="top">TOP</text></svg>
      <button class="wcs">WCS<svg class="dn"><use href="#down"/></svg></button>
    </div>
    <div class="navbar">
      <svg viewBox="0 0 26 170"><g fill="none" stroke="#2f3338"><circle cx="21" cy="4" r="2.500"/><path d="M4 21q0-5 9-5h9v9q-1 7-9 7t-9-7z"/><circle cx="13" cy="24" r="6"/><circle cx="13" cy="24" r="4"/><path d="M3 46h20M3 131.500h20" stroke="#777b7e"/><path d="M8 66q-5-7-3-8l4 4-1-9q2-2 3 0l1 6V50q2-2 3 0v8l2-7q2-1 2 1l-1 7 3-4q2 1-1 6l-3 6z"/><path d="M4 72l13 13M18 72L4 86M4 75v-3h3M15 72h3v3M4 83v3h3"/><circle cx="17" cy="84" r="4" fill="#777"/><path d="M20 87l3 4" stroke-width="2"/><path d="M13 119v-16M10 106l3-4 3 4"/><ellipse cx="13" cy="112" rx="9" ry="4"/><path d="M8 112l-3 3 4 2M4 136h4v4H4zM11 136h4v4h-4zM18 136h4v4h-4zM4 143h12v10H4z"/><circle cx="21" cy="165" r="2.500"/></g><path d="M8 145l5 3-5 3zM11 40h4l-2 2zM11 96h4l-2 2zM11 126h4l-2 2z" fill="#2f3338"/></svg>
    </div>
    <div class="command">
      <ul><li>Command:</li><li>**** No System Variable Changed ****</li><li class="now">Command:</li></ul>
      <div class="cmdline">
        <svg class="grip" width="4" height="14"><path d="M1 0v14M3.500 0v14" stroke="#999" stroke-dasharray="1 1"/></svg>
        <button aria-label="Close command line"><svg class="cx"><use href="#x"/></svg></button>
        <button aria-label="Customize"><svg width="12" height="12"><path d="M4 4l7 7" stroke="#ccc" stroke-width="2"/><path d="M1 2l2 2 1-1-2-2q3 0 3 3l-1 1q-3 0-3-3z" stroke="#ccc" fill="none"/></svg></button>
        <div class="entry">
          <svg width="12" height="11"><rect x=".5" y=".5" width="11" height="10" rx="1" fill="#a9acae" stroke="#85888a"/><path d="M2 3l3 2.500L2 8M6 8h4" stroke="#444" fill="none"/></svg><svg class="dn"><use href="#down"/></svg>
          <input type="text" aria-label="Command" placeholder="Type a command">
          <svg width="6" height="6"><path d="M0 5h6L3 1z" fill="#333"/></svg>
        </div>
      </div>
    </div>
  </main>

  <footer class="status">
    <nav class="layouts" aria-label="Layouts"><button class="on">Model</button><button>Layout1</button><button class="add" aria-label="New layout"><svg width="7" height="7"><path d="M3.500 0v7M0 3.500h7" stroke="#ccc" stroke-width="1.500"/></svg></button></nav>
    <div class="modes">
      <button class="model sep">MODEL</button>
      <button class="w20" aria-label="Grid"><svg viewBox="0 0 14 14"><path d="M4 1v12M7.500 1v12M11 1v12M1 4h12M1 7.500h12M1 11h12" stroke="#ccc"/></svg></button>
      <button class="act" aria-label="Snap"><svg viewBox="0 0 14 14"><path d="M2 3h11M2 7h11M2 11h11" stroke="#fff" stroke-width="2" stroke-dasharray="2 2"/></svg></button>
      <button class="mini sep" aria-label="Snap options"><svg class="dn"><use href="#down"/></svg></button>
      <button class="act gap" aria-label="Ortho"><svg viewBox="0 0 14 14"><path d="M2 0v13h12M2 9h4v4" stroke="#fff" fill="none"/></svg></button>
      <button class="w20" aria-label="Polar"><svg viewBox="0 0 14 14"><path d="M11 4a5 5 0 1 0 1 3M7 7h5M7 7l6-6" stroke="#ccc" fill="none"/></svg></button>
      <button class="mini" aria-label="Polar options"><svg class="dn"><use href="#down"/></svg></button>
      <button class="w20" aria-label="Isometric"><svg viewBox="0 0 14 14"><path d="M2 2l10 10" stroke="#d05050"/><path d="M7.500 1v12" stroke="#46c05c"/></svg></button>
      <button class="mini" aria-label="Isometric options"><svg class="dn"><use href="#down"/></svg></button>
      <button class="act" aria-label="Object snap tracking"><svg viewBox="0 0 14 14"><path d="M13 2L2 12h12" stroke="#fff" fill="none"/></svg></button>
      <button class="act gap" aria-label="Object snap"><svg viewBox="0 0 14 14"><path d="M3 3h9v10H3z" stroke="#fff" fill="none"/><path d="M1 1h3v3H1z" fill="#6a93c2" stroke="#fff"/></svg></button>
      <button class="mini sep" aria-label="Snap settings"><svg class="dn"><use href="#down"/></svg></button>
      <button class="act gap" aria-label="Annotation visibility"><svg viewBox="0 0 14 14"><use href="#compass"/><circle cx="12" cy="3" r="1.500" fill="none" stroke="#fff"/></svg></button>
      <button class="w20" aria-label="Auto scale"><svg viewBox="0 0 14 14"><use href="#compass"/><path d="M11 1l-1 3h3l-2 3" stroke="#ddd" fill="none"/></svg></button>
      <button class="w20" aria-label="Annotation scale"><svg viewBox="0 0 14 14"><use href="#compass"/></svg></button>
      <button class="scale sep">1:1<svg class="dn"><use href="#down"/></svg></button>
      <button class="w20" aria-label="Workspace"><svg viewBox="0 0 14 14"><circle cx="7" cy="7" r="3.500" fill="none" stroke="#ddd" stroke-width="2.500"/><circle cx="7" cy="7" r="5.500" fill="none" stroke="#ddd" stroke-width="2" stroke-dasharray="2.160 2.160"/></svg></button>
      <button class="mini sep" aria-label="Workspace options"><svg class="dn"><use href="#down"/></svg></button>
      <button class="sep" aria-label="Monitor"><svg viewBox="0 0 14 14"><path d="M7 1v12M1 7h12" stroke="#ddd" stroke-width="1.500"/></svg></button>
      <button class="w22 sep" aria-label="Isolate objects"><svg viewBox="0 0 14 14"><path d="M1 2h5v5H1zM5 13l3-5 3 5z" stroke="#ccc" fill="none"/><circle cx="11" cy="5" r="2.300" stroke="#ccc" fill="none"/></svg></button>
      <button class="w20 sep" aria-label="Hardware"><svg viewBox="0 0 14 14"><path d="M2 1h7l2 2v9H2z" fill="#b8d8ee"/><path d="M3 4h7M5 2v9M3 8h7" stroke="#3c80b8"/><path d="M1 10h6v3H1z" fill="#f2c14c"/><path d="M8 10l2 3 4-5" stroke="#54b84c" stroke-width="1.500" fill="none"/></svg></button>
      <button class="w20" aria-label="Clean screen"><svg viewBox="0 0 14 14"><path d="M1 2h12v10H1z" stroke="#ccc" fill="none"/><path d="M3 8v2h2M9 4h2v2" stroke="#ccc" fill="none"/></svg></button>
      <button class="w20" aria-label="Customization"><svg viewBox="0 0 14 14"><path d="M1 2.500h12M1 7.500h12M1 12.500h12" stroke="#ddd" stroke-width="1.500"/></svg></button>
    </div>
  </footer>
</div>
</body>
</html>
```
FILE: styles.css
```css
* { box-sizing: border-box; }
html, body { height: 100%; }
body {
  margin: 0;
  padding: 0 5px 0 8px;
  background: linear-gradient(#161413 0 25px, #20222a 25px 65px, #151413 65px 718px, #29292b 718px 743px, #151411 743px);
  font: 9px/12px "Open Sans", "Noto Sans", sans-serif;
  color: #e4e6e8;
  overflow: hidden;
}
button, input, select { font: inherit; color: inherit; border: 0; background: none; padding: 0; margin: 0; border-radius: 0; }
button { display: flex; align-items: center; justify-content: center; white-space: nowrap; }
svg { flex: none; display: block; }
.defs { display: none; }
.dn { width: 5px; height: 5px; }
.cx { width: 7px; height: 7px; }

.window {
  height: 100%;
  min-height: 640px;
  display: flex;
  flex-direction: column;
  background: #3a3a3a;
  border: solid #5a2118;
  border-width: 0 1px;
  border-radius: 7px 7px 0 0;
}

/* Title bar */
.titlebar { position: relative; display: flex; align-items: flex-start; height: 26px; padding-left: 34px; background: #5f2115; border-radius: 7px 7px 0 0; flex: none; }
.appmenu { position: absolute; z-index: 2; left: 1px; top: 7px; width: 32px; height: 32px; background: linear-gradient(#c2c2c2, #777); border: 1px solid #222; color: #222; align-items: center; padding-bottom: 6px; }
.appmenu .dn { align-self: flex-end; margin-bottom: 5px; }
.quick { display: flex; height: 19px; margin-top: 7px; width: 208px; background: #a2a2a2; border-top: 1px solid #bbb; border-right: 1px solid #bbb; padding-left: 3px; }
.quick button { flex: 0 0 19px; color: #ddd; }
.quick button.mini { flex-basis: 9px; }
.quick button.mini:last-child { flex-basis: 16px; }
.caption { flex: 1; display: flex; justify-content: center; gap: 14px; padding-top: 7px; color: #1c0b07; font-weight: 600; white-space: nowrap; }
.info { display: flex; height: 19px; margin-top: 7px; background: #a2a2a2; border: 1px solid #8c7f7b; color: #fff; width: 359px; }
.info > * { flex: none; }
.expand { width: 10px; background: #999; }
.search { width: 144px; padding: 0 2px; background: #6d6d6d; border: 1px solid #4a4a4a; font-style: italic; }
.search::placeholder { color: #ccc; opacity: 1; }
.find { width: 20px; }
.sign { width: 92px; gap: 4px; padding: 0 0 0 3px; justify-content: flex-start; }
.push { margin-left: auto; }
.cart { width: 16px; margin-left: 6px; }
.net { width: 23px; gap: 4px; margin-left: 4px; }
.help { width: 24px; gap: 5px; margin-left: 14px; }
.winbtns { display: flex; padding: 3px 0 0 20px; }
.winbtns button { width: 36px; height: 18px; }
.winbtns button:last-child { width: 37px; }

/* Ribbon tabs */
.menu { display: flex; align-items: flex-end; height: 17px; padding-left: 37px; background: #545454; border-top: 1px solid #3e3a39; border-bottom: 1px solid #3c3c3c; color: #c8c8c8; flex: none; }
.menu button { height: 14px; padding: 0 8px; }
.menu .on { height: 15px; background: #686868; border: 1px solid #8a8a8a; border-bottom: 0; color: #f2f2f2; margin-right: 1px; padding: 0 6px; }
.menu .tog { gap: 5px; margin-left: 10px; }

/* Ribbon panels */
.ribbon { display: flex; height: 79px; flex: none; border-bottom: 1px solid #888; padding: 0 0 1px 1px; }
.panel { display: flex; flex-direction: column; flex: none; border-right: 1px solid #444; box-shadow: inset -1px 0 #6a6a6a; background: #5e5e5e; }
.tools { display: flex; flex: 1; padding-top: 3px; }
.panel h2 { display: flex; align-items: center; justify-content: center; gap: 6px; height: 14px; margin: 0; background: #4e4e4e; font-size: 9px; font-weight: 400; position: relative; }
.panel h2 .dn { width: 6px; height: 6px; }
.launch { position: absolute; right: 3px; top: 6px; width: 5px; height: 5px; }
.draw { width: 180px; } .modify { width: 200px; } .annot { width: 151px; } .layers { width: 219px; } .block { width: 129px; }
.props { width: 212px; } .groups { width: 56px; } .utils { width: 77px; } .clip { width: 64px; } .view { width: 49px; }
.view h2 { justify-content: flex-start; padding-left: 4px; }
.big { flex-direction: column; justify-content: flex-start; align-self: flex-start; text-align: center; display: flex; flex: none; width: 36px; }
.big .dn { width: 5px; height: 5px; margin-top: 1px; }
.bi { width: 30px; height: 30px; margin-bottom: 1px; }
.stack { display: flex; flex-direction: column; }
.sm { height: 19px; gap: 3px; justify-content: flex-start; }
.si { width: 16px; height: 16px; }
.sm .dn { margin-left: 5px; }
.sm .dn.push { margin-left: auto; }
.sm .dn.wide { margin-left: 6px; }
.draw .big { width: 34px; }
.draw .big:nth-child(3) { width: 45px; }
.draw .big:nth-child(4) { width: 30px; }
.draw .stack { padding-left: 4px; }
.draw .sm .dn { margin-left: 2px; }
.modify .tools { padding-left: 3px; }
.modify .stack { width: 58px; }
.modify .stack:nth-child(2) { width: 56px; }
.modify .trim { width: 50px; margin-right: 10px; }
.modify .stack:last-child { width: 18px; }
.annot .big:nth-child(2) { width: 49px; }
.annot .stack { padding-left: 2px; }
.annot .tools { padding-left: 1px; }
.layers .big { width: 49px; }
.layers .side { flex: 1; }
.line { display: flex; }
.line .sm { width: 19px; padding-left: 2px; }
.line .sm:last-child { width: auto; gap: 1px; }
.block .big { width: 34px; }
.props .big { width: 49px; }
.combo { display: flex; align-items: center; height: 17px; border: 1px solid #3a3a3a; outline: 1px solid #747474; outline-offset: -2px; background: linear-gradient(#6a6a6a, #4c4c4c); padding: 0 4px; }
.combo select { appearance: none; flex: 1; min-width: 0; line-height: 12px; }
.combo select option { color: #222; }
.swatch { width: 11px; height: 11px; background: #fff; border: 1px solid #222; flex: none; }
.amb { color: #f8c050; }
.layer { gap: 4px; margin: 1px 1px 1px 0; }
.icons { padding-top: 1px; gap: 3px; }
.props .side { flex: 1; padding: 1px 1px 0 1px; display: flex; flex-direction: column; gap: 2px; }
.props .side .swatch { margin: 0 8px 0 5px; }
.rule { width: 51px; border-top: 1px solid #ddd; margin: 0 1px 0 -2px; }
.groups .big { width: 34px; }
.groups .active { background: #5c86b8; outline: 1px solid #86acd8; outline-offset: -1px; height: 17px; }
.utils .big { width: 56px; }
.clip .big { width: 43px; }
.view .big { width: 48px; }
.rest { flex: 1; background: linear-gradient(#4b4b4b 0 22px, #444a47 22px 48px, #393939 48px); }

/* Drawing tabs */
.files { display: flex; align-items: flex-end; height: 23px; padding: 2px 8px 1px 13px; background: #393939; border-bottom: 2px solid #5b5b5b; color: #acacac; flex: none; }
.file { flex: 0 0 106px; height: 20px; margin-right: -7px; padding: 2px 15px 0 12px; justify-content: space-between; background: linear-gradient(#646464, #525252); clip-path: polygon(0 100%, 3px 88%, 8px 12%, 11px 0, calc(100% - 13px) 0, calc(100% - 9px) 12%, calc(100% - 4px) 88%, 100% 100%); }
.file .cx { color: #333; width: 6px; height: 6px; }
.file.on { flex-basis: 108px; color: #f0f0f0; background: linear-gradient(#8e8e8e, #666); }
.kolam { flex-basis: 117px; } .lantai { flex-basis: 140px; } .cuci { flex-basis: 114px; } .last { flex-basis: 104px; }
.plus { width: 18px; height: 12px; margin: 0 0 3px 7px; border-radius: 4px 8px 4px 8px; background: #5a5a5a; }
.more { margin: 0 0 5px auto; }

/* Model space */
.canvas { position: relative; flex: 1; min-height: 0; background: #212830; overflow: hidden; }
.drawing { position: absolute; inset: 0; width: 100%; height: 100%; }
.brown { stroke: #7a3f3e; fill: none; }
.salmon { stroke: #7a3f3e; stroke-width: 2; }
.mag2 { stroke: #ae0cae; stroke-width: 1.500; fill: none; }
.mag3 { stroke: #8c1490; stroke-width: 2.500; fill: none; }
.bars { stroke: #04bd0c; fill: none; }
.cad { font: 8px "Liberation Sans", sans-serif; }
.cad.s, .cad.g { font-size: 6px; }
.cad.s { stroke: #e4e400; stroke-width: .3px; }
.mid { text-anchor: middle; }
.end { text-anchor: end; }
.m { fill: #cc0ccc; stroke: #cc0ccc; stroke-width: .2px; }
.g { fill: #00d41c; stroke: #00d41c; stroke-width: .3px; }
.y, .head { fill: #e4e400; }
.head { font: 15px "Liberation Sans", sans-serif; }
.under { stroke: #d8d800; stroke-width: 2; }
.viewlabel { position: absolute; left: 3px; top: 5px; display: flex; }
.docbtns { position: absolute; right: 9px; top: 8px; display: flex; gap: 8px; }
.cube { position: absolute; right: 12px; top: 31px; width: 108px; }
.cube svg { width: 108px; height: 108px; }
.cube text { text-anchor: middle; }
.nesw { font: bold 16px "Liberation Sans", sans-serif; fill: #b4b7b9; }
.top { font: bold 9px "Liberation Sans", sans-serif; fill: #4a525a; }
.wcs { width: 38px; height: 14px; margin: 16px auto 0; border-radius: 4px; background: #8f9294; border: 1px solid #a5a8aa; color: #4e5458; gap: 6px; }
.wcs svg.dn { width: 5px; height: 5px; color: #aaa; }
.navbar { position: absolute; right: 2px; top: 189px; width: 27px; height: 170px; background: #595c60; border: 1px solid #6c6f72; border-radius: 4px; }
.command { position: absolute; left: 348px; right: 348px; bottom: 0; }
.command, .entry input { font-family: "DejaVu Sans Mono", monospace; }
.command ul { list-style: none; margin: 0 0 2px 47px; padding: 0; display: flex; flex-direction: column; gap: 3px; align-items: flex-start; }
.command li { height: 13px; padding: 0 2px; border-radius: 2px; background: #4c5052; color: #bfc2c4; white-space: pre; }
.command .now { color: #f0f0f0; background: #5a5e60; }
.cmdline { display: flex; height: 21px; align-items: center; background: linear-gradient(#707070, #3c3c3c); border-left: 1px solid #777; }
.grip { margin: 0 3px 0 1px; }
.cmdline button { width: 17px; color: #ccc; }
.entry { flex: 1; height: 21px; display: flex; align-items: center; gap: 3px; padding: 0 3px 0 4px; background: #bcbec0; color: #555; }
.entry input { flex: 1; font-style: italic; padding-left: 2px; }
.entry input::placeholder { color: #6a6c6e; opacity: 1; }

/* Status bar */
.status { display: flex; justify-content: space-between; height: 22px; background: #3a3a3a; flex: none; }
.layouts { display: flex; padding-left: 8px; }
.layouts button { height: 15px; padding: 0 9px; background: #595959; color: #a8a8a8; clip-path: polygon(0 0, 100% 0, calc(100% - 6px) 85%, calc(100% - 9px) 100%, 9px 100%, 6px 85%); width: 51px; }
.layouts .on { background: linear-gradient(#666, #8a8a8a); color: #fff; font-weight: 700; width: 48px; }
.layouts .add { width: 20px; padding: 0; margin-left: 2px; }
.modes { display: flex; align-items: center; background: #4f4f4f; border: 1px solid #6a6a6a; color: #ddd; }
.modes button { width: 18px; height: 20px; }
.modes button svg:not(.dn) { width: 14px; height: 14px; }
.modes .mini { width: 12px; }
.modes .mini.sep { width: 14px; }
.modes .w20 { width: 20px; }
.modes .w22 { width: 22px; }
.modes .sep { border-right: 1px solid #747474; }
.modes .model { width: 40px; }
.modes .scale { width: 27px; gap: 3px; }
.modes .act { background: #6a93c2; height: 18px; color: #fff; }
.modes .gap { margin-left: 2px; }
```
